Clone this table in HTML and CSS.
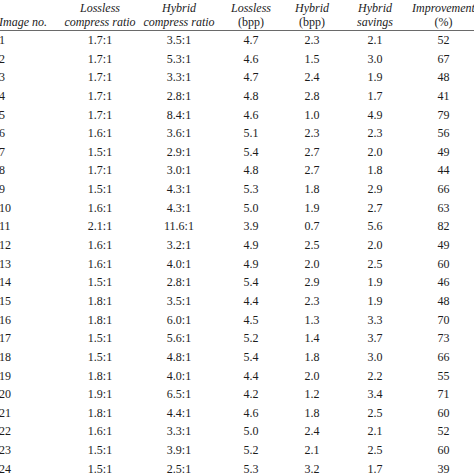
FILE: index.html
```html
<!DOCTYPE html>
<html>
<head>
<meta charset="utf-8">
<link rel="stylesheet" href="styles.css">
</head>
<body>
<div class="table">
  <div class="row head">
    <div class="c first"><span class="l1">&nbsp;</span><span>Image no.</span></div>
    <div class="c"><span>Lossless</span><span>compress ratio</span></div>
    <div class="c"><span>Hybrid</span><span>compress ratio</span></div>
    <div class="c"><span>Lossless</span><span class="up">(bpp)</span></div>
    <div class="c"><span>Hybrid</span><span class="up">(bpp)</span></div>
    <div class="c"><span>Hybrid</span><span>savings</span></div>
    <div class="c"><span>Improvement</span><span class="up">(%)</span></div>
  </div>
  <div class="body">
    <div class="row"><div class="c first">1</div><div class="c">1.7:1</div><div class="c">3.5:1</div><div class="c">4.7</div><div class="c">2.3</div><div class="c">2.1</div><div class="c">52</div></div>
    <div class="row"><div class="c first">2</div><div class="c">1.7:1</div><div class="c">5.3:1</div><div class="c">4.6</div><div class="c">1.5</div><div class="c">3.0</div><div class="c">67</div></div>
    <div class="row"><div class="c first">3</div><div class="c">1.7:1</div><div class="c">3.3:1</div><div class="c">4.7</div><div class="c">2.4</div><div class="c">1.9</div><div class="c">48</div></div>
    <div class="row"><div class="c first">4</div><div class="c">1.7:1</div><div class="c">2.8:1</div><div class="c">4.8</div><div class="c">2.8</div><div class="c">1.7</div><div class="c">41</div></div>
    <div class="row"><div class="c first">5</div><div class="c">1.7:1</div><div class="c">8.4:1</div><div class="c">4.6</div><div class="c">1.0</div><div class="c">4.9</div><div class="c">79</div></div>
    <div class="row"><div class="c first">6</div><div class="c">1.6:1</div><div class="c">3.6:1</div><div class="c">5.1</div><div class="c">2.3</div><div class="c">2.3</div><div class="c">56</div></div>
    <div class="row"><div class="c first">7</div><div class="c">1.5:1</div><div class="c">2.9:1</div><div class="c">5.4</div><div class="c">2.7</div><div class="c">2.0</div><div class="c">49</div></div>
    <div class="row"><div class="c first">8</div><div class="c">1.7:1</div><div class="c">3.0:1</div><div class="c">4.8</div><div class="c">2.7</div><div class="c">1.8</div><div class="c">44</div></div>
    <div class="row"><div class="c first">9</div><div class="c">1.5:1</div><div class="c">4.3:1</div><div class="c">5.3</div><div class="c">1.8</div><div class="c">2.9</div><div class="c">66</div></div>
    <div class="row"><div class="c first">10</div><div class="c">1.6:1</div><div class="c">4.3:1</div><div class="c">5.0</div><div class="c">1.9</div><div class="c">2.7</div><div class="c">63</div></div>
    <div class="row"><div class="c first">11</div><div class="c">2.1:1</div><div class="c">11.6:1</div><div class="c">3.9</div><div class="c">0.7</div><div class="c">5.6</div><div class="c">82</div></div>
    <div class="row"><div class="c first">12</div><div class="c">1.6:1</div><div class="c">3.2:1</div><div class="c">4.9</div><div class="c">2.5</div><div class="c">2.0</div><div class="c">49</div></div>
    <div class="row"><div class="c first">13</div><div class="c">1.6:1</div><div class="c">4.0:1</div><div class="c">4.9</div><div class="c">2.0</div><div class="c">2.5</div><div class="c">60</div></div>
    <div class="row"><div class="c first">14</div><div class="c">1.5:1</div><div class="c">2.8:1</div><div class="c">5.4</div><div class="c">2.9</div><div class="c">1.9</div><div class="c">46</div></div>
    <div class="row"><div class="c first">15</div><div class="c">1.8:1</div><div class="c">3.5:1</div><div class="c">4.4</div><div class="c">2.3</div><div class="c">1.9</div><div class="c">48</div></div>
    <div class="row"><div class="c first">16</div><div class="c">1.8:1</div><div class="c">6.0:1</div><div class="c">4.5</div><div class="c">1.3</div><div class="c">3.3</div><div class="c">70</div></div>
    <div class="row"><div class="c first">17</div><div class="c">1.5:1</div><div class="c">5.6:1</div><div class="c">5.2</div><div class="c">1.4</div><div class="c">3.7</div><div class="c">73</div></div>
    <div class="row"><div class="c first">18</div><div class="c">1.5:1</div><div class="c">4.8:1</div><div class="c">5.4</div><div class="c">1.8</div><div class="c">3.0</div><div class="c">66</div></div>
    <div class="row"><div class="c first">19</div><div class="c">1.8:1</div><div class="c">4.0:1</div><div class="c">4.4</div><div class="c">2.0</div><div class="c">2.2</div><div class="c">55</div></div>
    <div class="row"><div class="c first">20</div><div class="c">1.9:1</div><div class="c">6.5:1</div><div class="c">4.2</div><div class="c">1.2</div><div class="c">3.4</div><div class="c">71</div></div>
    <div class="row"><div class="c first">21</div><div class="c">1.8:1</div><div class="c">4.4:1</div><div class="c">4.6</div><div class="c">1.8</div><div class="c">2.5</div><div class="c">60</div></div>
    <div class="row"><div class="c first">22</div><div class="c">1.6:1</div><div class="c">3.3:1</div><div class="c">5.0</div><div class="c">2.4</div><div class="c">2.1</div><div class="c">52</div></div>
    <div class="row"><div class="c first">23</div><div class="c">1.5:1</div><div class="c">3.9:1</div><div class="c">5.2</div><div class="c">2.1</div><div class="c">2.5</div><div class="c">60</div></div>
    <div class="row"><div class="c first">24</div><div class="c">1.5:1</div><div class="c">2.5:1</div><div class="c">5.3</div><div class="c">3.2</div><div class="c">1.7</div><div class="c">39</div></div>
  </div>
</div>
</body>
</html>
```
FILE: styles.css
```css
html, body {
  margin: 0;
  padding: 0;
  background: #ffffff;
  overflow: hidden;
}
body {
  font-family: "Liberation Serif", "Times New Roman", serif;
  font-size: 12px;
  color: #1c1c1c;
}
.table {
  width: 480px;
  margin-left: -1px;
}
.row {
  display: grid;
  grid-template-columns: 63px 76px 82px 62px 60px 66px 71px;
}
.c {
  text-align: center;
  white-space: nowrap;
}
.c.first {
  text-align: left;
}
.head {
  padding-top: 1px;
  height: 29px;
  border-bottom: 1px solid #6a6a6a;
  font-style: italic;
  line-height: 14px;
}
.head .c {
  display: flex;
  flex-direction: column;
  align-items: center;
}
.head .c.first {
  align-items: flex-start;
}
.head .up {
  font-style: normal;
}
.body .row {
  height: 18.65px;
  line-height: 18.65px;
}
```
